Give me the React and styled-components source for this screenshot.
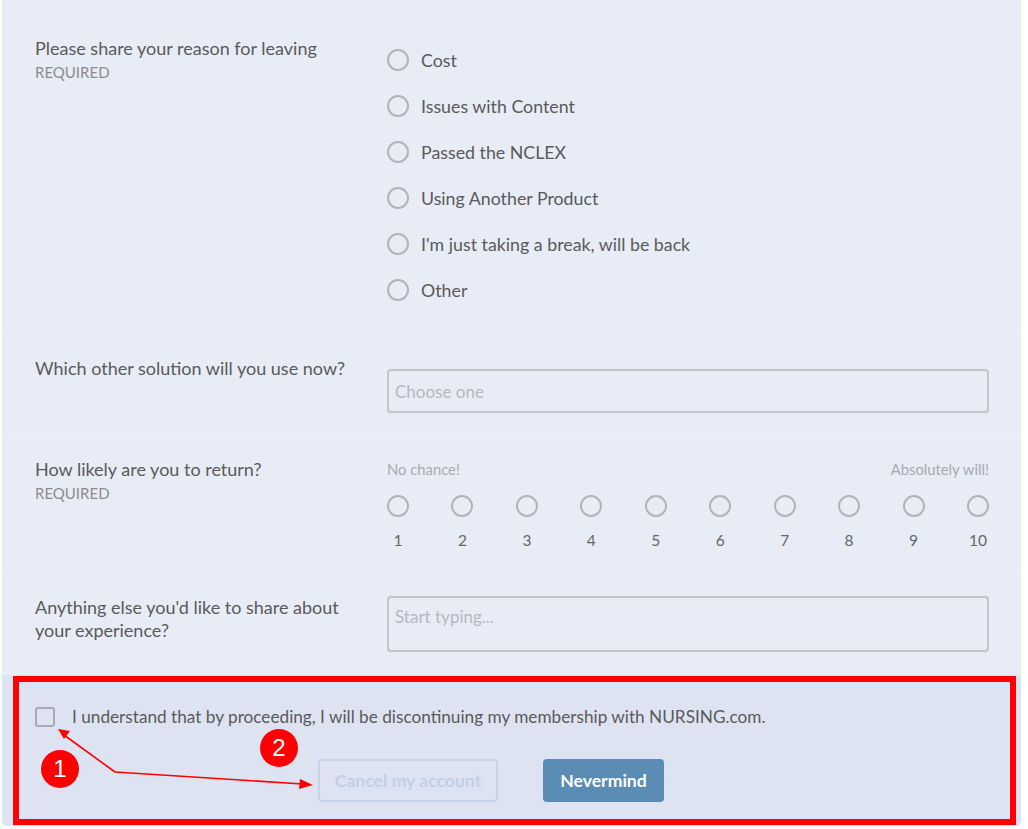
import React from "react";
import styled, { createGlobalStyle } from "styled-components";

const Global = createGlobalStyle`
  html, body { margin: 0; padding: 0; background: #ffffff; }
  body { font-family: Lato, "Open Sans", sans-serif; color: #5a5a5a; }
  * { box-sizing: border-box; }
`;

const Page = styled.div`
  padding: 0 7px 0 2px;
  width: 1028px;
`;

const Card = styled.div`
  width: 1019px;
  background: #e8ecf6;
  border-radius: 0 0 5px 5px;
  overflow: hidden;
`;

const Section = styled.section`
  display: grid;
  grid-template-columns: 352px 602px;
  padding: ${(p) => p.$pad};
  padding-left: 33px;
  border-top: ${(p) => (p.$first ? "none" : "1px solid #eef1f9")};
`;

const LabelBlock = styled.div`
  padding-top: ${(p) => p.$top || 0}px;
`;

const Question = styled.div`
  font-size: 18px;
  line-height: 23px;
  color: #5a5a5a;
  width: 312px;
`;

const Required = styled.div`
  font-size: 15px;
  line-height: 18px;
  color: #8c8c8c;
  margin-top: 3px;
`;

const RadioList = styled.div`
  display: flex;
  flex-direction: column;
`;

const RadioRow = styled.label`
  display: flex;
  align-items: center;
  height: 46px;
  gap: 12px;
  font-size: 17.8px;
  color: #5a5a5a;
`;

const Circle = styled.span`
  width: 22px;
  height: 22px;
  border-radius: 50%;
  border: 2px solid #b3b4bb;
  flex: none;
`;

const Field = styled.div`
  margin-top: ${(p) => p.$top || 0}px;
  height: ${(p) => p.$h}px;
  border: 2px solid #c2c4cc;
  border-radius: 4px;
  padding: ${(p) => (p.$multi ? "8px 6px" : "0 6px")};
  display: flex;
  align-items: ${(p) => (p.$multi ? "flex-start" : "center")};
  font-size: 17px;
  color: #b5b8c1;
`;

const Scale = styled.div`
  padding-top: 2px;
`;

const ScaleEnds = styled.div`
  display: flex;
  justify-content: space-between;
  font-size: 14.8px;
  line-height: 18px;
  color: #a8aab1;
`;

const ScaleRow = styled.div`
  display: flex;
  justify-content: space-between;
  margin-top: 17px;
`;

const ScaleItem = styled.div`
  display: flex;
  flex-direction: column;
  align-items: center;
  width: 22px;
  gap: 14px;
`;

const Num = styled.span`
  font-size: 15.5px;
  line-height: 18px;
  color: #666;
  white-space: nowrap;
`;

const Footer = styled.div`
  position: relative;
  background: #dee3f2;
  height: 151px;
  padding: 31px 0 0 33px;
`;

const CheckRow = styled.div`
  display: flex;
  align-items: center;
  gap: 17px;
  font-size: 17.2px;
  color: #5a5a5a;
`;

const Box = styled.span`
  width: 20px;
  height: 20px;
  border: 2px solid #a9abb3;
  border-radius: 3px;
  flex: none;
`;

const Buttons = styled.div`
  display: flex;
  gap: 45px;
  margin: 32px 0 0 283px;
`;

const Button = styled.button`
  height: 43px;
  padding: 0;
  border-radius: 4px;
  font-family: Lato, sans-serif;
  font-weight: 700;
  font-size: 17.6px;
  border: 2px solid ${(p) => (p.$primary ? "#5b8db4" : "#c5d4e8")};
  background: ${(p) => (p.$primary ? "#5b8db4" : "transparent")};
  color: ${(p) => (p.$primary ? "#ffffff" : "#c2d0e3")};
  width: ${(p) => p.$w}px;
`;

const RedFrame = styled.div`
  position: absolute;
  left: 11px;
  top: 1px;
  width: 1003px;
  height: 149px;
  border: 6px solid #ff0000;
  pointer-events: none;
`;

const Badge = styled.div`
  position: absolute;
  left: ${(p) => p.$x - 19}px;
  top: ${(p) => p.$y - 19}px;
  width: 38px;
  height: 38px;
  border-radius: 50%;
  background: #ff0000;
  color: #fff;
  font-family: "Liberation Sans", Arial, sans-serif;
  font-size: 24px;
  display: flex;
  align-items: center;
  justify-content: center;
`;

const Arrows = styled.svg`
  position: absolute;
  left: 0;
  top: 0;
  pointer-events: none;
`;

const reasons = [
  "Cost",
  "Issues with Content",
  "Passed the NCLEX",
  "Using Another Product",
  "I'm just taking a break, will be back",
  "Other",
];

export default function App() {
  return (
    <Page>
      <Global />
      <Card>
        <Section $first $pad="37px 32px 21px 33px">
          <LabelBlock $top={0}>
            <Question>Please share your reason for leaving</Question>
            <Required>REQUIRED</Required>
          </LabelBlock>
          <RadioList>
            {reasons.map((r) => (
              <RadioRow key={r}>
                <Circle />
                {r}
              </RadioRow>
            ))}
          </RadioList>
        </Section>
        <Section $pad="22px 32px 23px 33px">
          <LabelBlock>
            <Question>Which other solution will you use now?</Question>
          </LabelBlock>
          <Field $top={12} $h={44}>Choose one</Field>
        </Section>
        <Section $pad="21px 32px 25px 33px">
          <LabelBlock>
            <Question>How likely are you to return?</Question>
            <Required>REQUIRED</Required>
          </LabelBlock>
          <Scale>
            <ScaleEnds>
              <span>No chance!</span>
              <span>Absolutely will!</span>
            </ScaleEnds>
            <ScaleRow>
              {Array.from({ length: 10 }, (_, i) => (
                <ScaleItem key={i}>
                  <Circle />
                  <Num>{i + 1}</Num>
                </ScaleItem>
              ))}
            </ScaleRow>
          </Scale>
        </Section>
        <Section $pad="21px 32px 23px 33px">
          <LabelBlock>
            <Question>Anything else you'd like to share about your experience?</Question>
          </LabelBlock>
          <Field $multi $h={56} $top={0}>Start typing...</Field>
        </Section>
        <Footer>
          <CheckRow>
            <Box />
            I understand that by proceeding, I will be discontinuing my membership with NURSING.com.
          </CheckRow>
          <Buttons>
            <Button $w={180}>Cancel my account</Button>
            <Button $primary $w={121}>Nevermind</Button>
          </Buttons>
          <RedFrame />
          <Arrows width="1019" height="151" viewBox="0 0 1019 151">
            <g stroke="#ff0000" strokeWidth="1.6" fill="none">
              <line x1="113" y1="97" x2="62" y2="60" />
              <line x1="113" y1="97" x2="300" y2="109" />
            </g>
            <g fill="#ff0000">
              <polygon points="56,54 68,56 62,64" />
              <polygon points="311,110 298,104 297,114" />
            </g>
          </Arrows>
          <Badge $x={58} $y={94}>1</Badge>
          <Badge $x={277} $y={73}>2</Badge>
        </Footer>
      </Card>
    </Page>
  );
}
